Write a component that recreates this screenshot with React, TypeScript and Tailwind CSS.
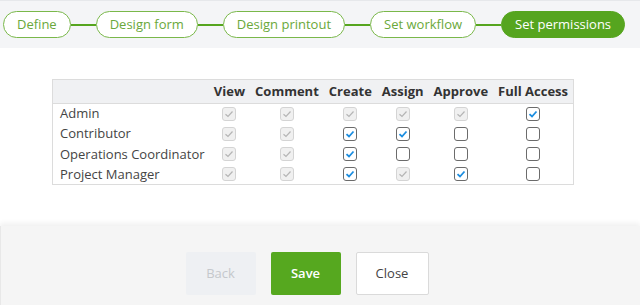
import type { ReactNode } from 'react'

type Box = 'on' | 'off' | 'lock'

const steps = ['Define', 'Design form', 'Design printout', 'Set workflow', 'Set permissions']
const cols = ['View', 'Comment', 'Create', 'Assign', 'Approve', 'Full Access']
const rows: { name: string; boxes: Box[] }[] = [
  { name: 'Admin', boxes: ['lock', 'lock', 'lock', 'lock', 'lock', 'on'] },
  { name: 'Contributor', boxes: ['lock', 'lock', 'on', 'on', 'off', 'off'] },
  { name: 'Operations Coordinator', boxes: ['lock', 'lock', 'on', 'off', 'off', 'off'] },
  { name: 'Project Manager', boxes: ['lock', 'lock', 'on', 'lock', 'on', 'off'] },
]

function Check({ state }: { state: Box }) {
  if (state === 'lock') {
    return (
      <span className="inline-flex h-[14px] w-[14px] items-center justify-center rounded-[3px] border border-[#d4d4d4] bg-[#f0f0f0] align-middle">
        <svg width="10" height="10" viewBox="0 0 10 10" fill="none">
          <path d="M1.5 5.2 4 7.5 8.5 2.5" stroke="#b5b5b5" strokeWidth="1.2" />
        </svg>
      </span>
    )
  }
  return (
    <span className="inline-flex h-[14px] w-[14px] items-center justify-center rounded-[3px] border border-[#6b6b6b] bg-white align-middle">
      {state === 'on' && (
        <svg width="10" height="10" viewBox="0 0 10 10" fill="none">
          <path d="M1.5 5.2 4 7.5 8.5 2.5" stroke="#1b8de0" strokeWidth="1.8" />
        </svg>
      )}
    </span>
  )
}

function Step({ children, active }: { children: ReactNode; active?: boolean }) {
  return (
    <div
      className={
        active
          ? 'flex h-[27px] items-center rounded-full border border-[#56a51f] bg-[#56a51f] px-[13px] text-white'
          : 'flex h-[27px] items-center rounded-full border border-[#7ab84a] bg-white px-[13px] text-[#6aa83a]'
      }
    >
      {children}
    </div>
  )
}

export default function App() {
  return (
    <div className="flex h-[305px] w-[640px] flex-col bg-white text-[13px] text-[#333] [font-family:'Open_Sans',sans-serif]">
      <div className="flex h-[48px] items-center border-t border-[#e6e8eb] bg-[#f4f5f7] pl-[3px]">
        {steps.map((s, i) => (
          <div key={s} className="flex items-center">
            {i > 0 && <div className="h-[2px] w-[25px] bg-[#56a51f]" />}
            <Step active={i === 4}>{s}</Step>
          </div>
        ))}
      </div>

      <div className="flex flex-1 justify-start pl-[52px] pt-[31px]">
        <table className="h-[106px] w-[522px] border-collapse border border-[#dcdcdc]">
          <thead>
            <tr className="h-[24px] border-b border-[#dcdcdc] bg-[#f0f1f3]">
              <th />
              {cols.map((c) => (
                <th key={c} className="w-0 px-[5px] pt-[1px] text-center font-bold whitespace-nowrap text-[#333]">
                  {c}
                </th>
              ))}
            </tr>
          </thead>
          <tbody>
            {rows.map((r) => (
              <tr key={r.name} className="h-[20px]">
                <td className="pl-[7px] leading-none whitespace-nowrap text-[#444]">{r.name}</td>
                {r.boxes.map((b, i) => (
                  <td key={i} className="text-center leading-none">
                    <Check state={b} />
                  </td>
                ))}
              </tr>
            ))}
          </tbody>
        </table>
      </div>

      <div className="flex h-[79px] items-start justify-center gap-[15px] border-l border-[#e8e8e8] bg-[#f5f5f5] pt-[26px] pr-[27px] shadow-[0_-3px_5px_rgba(0,0,0,0.06)]">
        <button className="h-[43px] w-[70px] rounded-[2px] bg-[#eef0f3] text-[#c5c8cc]">Back</button>
        <button className="h-[43px] w-[70px] rounded-[2px] bg-[#56a81f] font-semibold text-white">Save</button>
        <button className="h-[43px] w-[73px] rounded-[2px] border border-[#dadada] bg-white text-[#444]">
          Close
        </button>
      </div>
    </div>
  )
}
